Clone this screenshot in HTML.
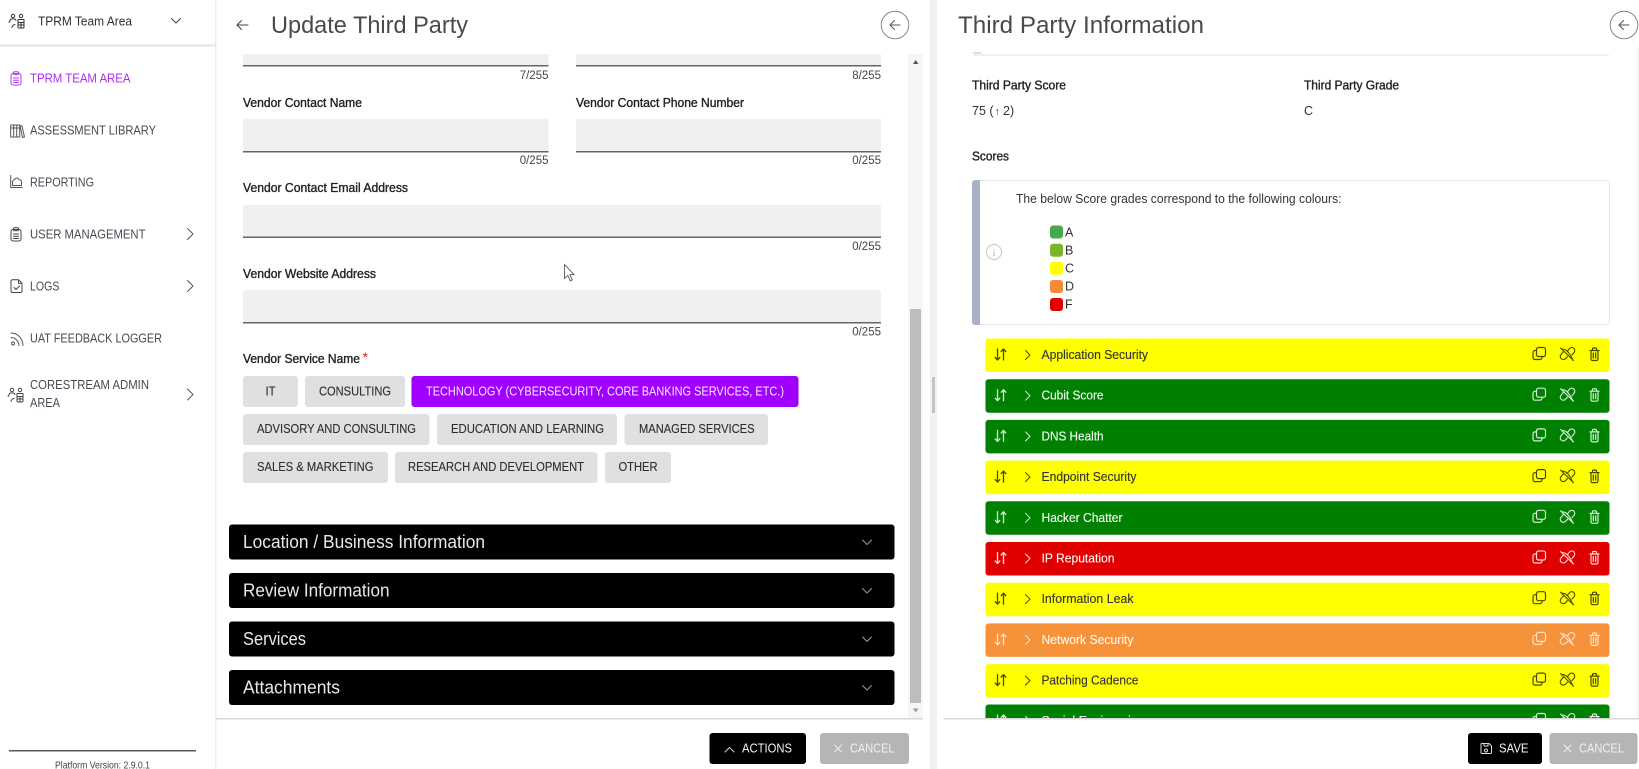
<!DOCTYPE html>
<html><head><meta charset="utf-8"><title>Update Third Party</title>
<style>
html,body{margin:0;padding:0;background:#fff;width:1639px;height:769px;overflow:hidden}
svg{display:block;font-family:"Liberation Sans",sans-serif}
text{white-space:pre}
.ic{fill:none;stroke:currentColor;stroke-width:1;stroke-linecap:round;stroke-linejoin:round}
.lb{font-size:12.5px;fill:#222;stroke:#222;stroke-width:.35}
.ct{font-size:11.5px;fill:#444;text-anchor:end}
.ch{font-size:12.5px;fill:#2e2e2e;stroke:#2e2e2e;stroke-width:.12}
.nav{font-size:12.5px;fill:#4a4a55}
.ac{font-size:18px;fill:#e8e8e8}
.ti{font-size:24px;fill:#4a4a4a}
.rw{font-size:12.5px}
.rw text{stroke:currentColor;stroke-width:.12}
</style></head><body>
<svg width="1639" height="769" viewBox="0 0 1639 769" xmlns="http://www.w3.org/2000/svg">
<defs>
<g id="ri" class="ic">
  <path d="M998 10.500v11M995.700 19 998 21.500l2.300-2.500M1004 21.500v-11M1001.700 13 1004 10.500l2.300 2.500" stroke-width="1.300"/>
  <path d="M1026 12l4.500 4.500-4.500 4.500"/>
  <rect x="1537" y="9" width="9" height="9" rx="2" stroke-width="1.200"/>
  <path d="M1537 12h-1.500a2 2 0 0 0-2 2v5a2 2 0 0 0 2 2h5a2 2 0 0 0 2-2v-1" stroke-width="1.200"/>
  <path d="M1561 9.500 1574 22M1564 13l-2.500 3a3 3 0 0 0 4.500 4l2-2M1568 12.500l2-2.500a3 3 0 0 1 4.500 4l-2 2.500M1563 10.500c3 0 5 2 7 5s3 4.500 3 6" stroke-width="1.100"/>
  <path d="M1590.500 12h9M1593 12v-1.500a1 1 0 0 1 1-1h2a1 1 0 0 1 1 1V12M1591.500 12v8.500a1.500 1.500 0 0 0 1.500 1.500h4a1.500 1.500 0 0 0 1.500-1.500V12M1593.800 14.500v5M1596.200 14.500v5" stroke-width="1.200"/>
</g>
<g id="grp" class="ic" stroke-width=".9">
  <circle cx="4" cy="3" r="1.700"/><path d="M0 9.500 2 6h4l1 1.500"/>
  <circle cx="12" cy="3" r="1.700"/><path d="M9 6.500h6v3H9z"/>
  <rect x="9" y="9.500" width="6" height="5.500" rx="1"/><path d="M3 14.500c0-2 2-3 3-3M9 12h6M12 9.500V15"/>
</g>
<g id="clip" class="ic" stroke-width="1.100">
  <rect x="1" y="2.500" width="10" height="11.500" rx="2"/><rect x="3.500" y=".7" width="5" height="3" rx="1"/>
  <path d="M3.500 7h5M3.500 9.300h5M3.500 11.500h5"/>
</g>
<g id="chr" class="ic"><path d="M0 0l5.500 5.500L0 11"/></g>
<g id="chd" class="ic"><path d="M0 0l4.500 4.500L9 0"/></g>
</defs>

<rect x="0" y="0" width="1639" height="769" fill="#fff"/>
<rect x="215" y="0" width="1.500" height="769" fill="#ececec"/>
<rect x="930" y="0" width="7" height="769" fill="#f1f1f1"/>
<rect x="932" y="377" width="3" height="36" fill="#c4c4c4"/>
<rect x="1637" y="47" width="2" height="671" fill="#f4f4f4"/>

<!-- sidebar -->
<use href="#grp" x="9" y="13" color="#333"/>
<text x="38" y="25.500" font-size="13" fill="#2f2f2f" textLength="94" lengthAdjust="spacingAndGlyphs">TPRM Team Area</text>
<use href="#chd" x="171.500" y="18.500" color="#444"/>
<rect x="0" y="44.500" width="215" height="2" fill="#e4e4e4"/>

<use href="#clip" x="10" y="71" color="#b23cf0"/>
<text class="nav" style="fill:#b02ff0" x="30" y="82.500" textLength="100.500" lengthAdjust="spacingAndGlyphs">TPRM TEAM AREA</text>
<g class="ic" color="#555" transform="translate(10,124)"><path d="M.7 1h3v12h-3zM3.700 1h3v12h-3zM6.700 1h3v12h-3zM10 1.500l2 .5 2.500 11-2 .5zM.7 4h9"/></g>
<text class="nav" x="30" y="134.500" textLength="126" lengthAdjust="spacingAndGlyphs">ASSESSMENT LIBRARY</text>
<g class="ic" color="#555" transform="translate(10,175)"><path d="M.7.500v12h11.500M2.500 10.500v-4c1.500-2 3-3.500 4.500-3.500 1.500 0 2 2 3 2s1.500.5 1.500 2v3.500z"/></g>
<text class="nav" x="30" y="186.500" textLength="64" lengthAdjust="spacingAndGlyphs">REPORTING</text>
<use href="#clip" x="10" y="227" color="#444"/>
<text class="nav" x="30" y="238.500" textLength="115.500" lengthAdjust="spacingAndGlyphs">USER MANAGEMENT</text>
<use href="#chr" x="187.500" y="228.500" color="#555"/>
<g class="ic" color="#444" stroke-width="1.100" transform="translate(11,279)"><path d="M1.500.7h6L11 4.200V12a1.500 1.500 0 0 1-1.500 1.500h-8A1.500 1.500 0 0 1 0 12V2.200A1.500 1.500 0 0 1 1.500.7zM7.500.7v3.500H11M3 8.500l2 2 3.500-3.500"/></g>
<text class="nav" x="30" y="290.500" textLength="29.500" lengthAdjust="spacingAndGlyphs">LOGS</text>
<use href="#chr" x="187.500" y="280.500" color="#555"/>
<g class="ic" color="#555" transform="translate(11,332)"><path d="M0 5.500c4 0 7.500 3 8 8M0 1c6.500 0 11.500 5 12 12.500"/><circle cx="2" cy="11.500" r="1.500"/></g>
<text class="nav" x="30" y="342.500" textLength="132" lengthAdjust="spacingAndGlyphs">UAT FEEDBACK LOGGER</text>
<use href="#grp" x="8" y="387" color="#444"/>
<text class="nav" x="30" y="389" textLength="119" lengthAdjust="spacingAndGlyphs">CORESTREAM ADMIN</text>
<text class="nav" x="30" y="407" textLength="30" lengthAdjust="spacingAndGlyphs">AREA</text>
<use href="#chr" x="187.500" y="389" color="#555"/>
<rect x="9" y="750" width="187" height="1.500" fill="#5a5a5a"/>
<text x="55" y="768.500" font-size="9.800" fill="#444" textLength="95" lengthAdjust="spacingAndGlyphs">Platform Version: 2.9.0.1</text>

<!-- left panel header -->
<g class="ic" color="#444" transform="translate(237,20)"><path d="M0 5h11M4.500.5 0 5l4.500 4.500"/></g>
<text class="ti" x="271" y="33" textLength="197" lengthAdjust="spacingAndGlyphs">Update Third Party</text>
<circle cx="895" cy="25" r="13.800" fill="#fff" stroke="#888" stroke-width="1"/>
<g class="ic" color="#555" transform="translate(890,20)"><path d="M0 5h10M4.500.5 0 5l4.500 4.500"/></g>

<!-- scroll track -->
<rect x="908" y="54" width="15" height="664" fill="#f6f6f6"/>
<rect x="910" y="309" width="11" height="394" fill="#bdbdbd"/>
<path d="M913 64l2.700-4 2.700 4z" fill="#555"/>
<path d="M913 708.500l2.700 4 2.700-4z" fill="#999"/>

<!-- fields -->
<rect x="243" y="54" width="305.500" height="12" fill="#f0f0f0"/><rect x="243" y="65" width="305.500" height="1.500" fill="#666"/>
<rect x="576" y="54" width="305" height="12" fill="#f0f0f0"/><rect x="576" y="65" width="305" height="1.500" fill="#666"/>
<text class="ct" x="548.500" y="79">7/255</text>
<text class="ct" x="881" y="79">8/255</text>
<text class="lb" x="243" y="107" textLength="119" lengthAdjust="spacingAndGlyphs">Vendor Contact Name</text>
<text class="lb" x="576" y="107" textLength="168" lengthAdjust="spacingAndGlyphs">Vendor Contact Phone Number</text>
<rect x="243" y="119" width="305.500" height="33" rx="2" fill="#f0f0f0"/><rect x="243" y="151" width="305.500" height="1.500" fill="#666"/>
<rect x="576" y="119" width="305" height="33" rx="2" fill="#f0f0f0"/><rect x="576" y="151" width="305" height="1.500" fill="#666"/>
<text class="ct" x="548.500" y="164">0/255</text>
<text class="ct" x="881" y="164">0/255</text>
<text class="lb" x="243" y="192" textLength="165" lengthAdjust="spacingAndGlyphs">Vendor Contact Email Address</text>
<rect x="243" y="205" width="638" height="33" rx="2" fill="#f0f0f0"/><rect x="243" y="236.500" width="638" height="1.500" fill="#666"/>
<text class="ct" x="881" y="250">0/255</text>
<text class="lb" x="243" y="278" textLength="133" lengthAdjust="spacingAndGlyphs">Vendor Website Address</text>
<rect x="243" y="290" width="638" height="33" rx="2" fill="#f0f0f0"/><rect x="243" y="322" width="638" height="1.500" fill="#666"/>
<text class="ct" x="881" y="335.500">0/255</text>
<text class="lb" x="243" y="363" textLength="117" lengthAdjust="spacingAndGlyphs">Vendor Service Name</text>
<text x="362.500" y="362" font-size="14" fill="#e02020">*</text>

<!-- cursor -->
<path d="M564.500 264.500v14l3.300-3 2.500 5.300 2-1-2.500-5.200h4.200z" fill="#fff" stroke="#444" stroke-width=".8"/>

<!-- chips -->
<g fill="#e0e0e0">
<rect x="243" y="376" width="55" height="31" rx="3"/>
<rect x="305" y="376" width="100" height="31" rx="3"/>
<rect x="243" y="414" width="186.500" height="31" rx="3"/>
<rect x="437" y="414" width="180" height="31" rx="3"/>
<rect x="624.500" y="414" width="143.500" height="31" rx="3"/>
<rect x="243" y="452" width="145" height="31" rx="3"/>
<rect x="395" y="452" width="202.500" height="31" rx="3"/>
<rect x="605" y="452" width="66" height="31" rx="3"/>
</g>
<rect x="411.500" y="376" width="387" height="31" rx="3" fill="#a100ff"/>
<text class="ch" x="265.500" y="395.500" textLength="10" lengthAdjust="spacingAndGlyphs">IT</text>
<text class="ch" x="319" y="395.500" textLength="72" lengthAdjust="spacingAndGlyphs">CONSULTING</text>
<text x="426" y="395.500" font-size="12.5" fill="#f6eaff" textLength="358" lengthAdjust="spacingAndGlyphs">TECHNOLOGY (CYBERSECURITY, CORE BANKING SERVICES, ETC.)</text>
<text class="ch" x="257" y="433" textLength="159" lengthAdjust="spacingAndGlyphs">ADVISORY AND CONSULTING</text>
<text class="ch" x="451" y="433" textLength="153" lengthAdjust="spacingAndGlyphs">EDUCATION AND LEARNING</text>
<text class="ch" x="639" y="433" textLength="115.500" lengthAdjust="spacingAndGlyphs">MANAGED SERVICES</text>
<text class="ch" x="257" y="471" textLength="116.500" lengthAdjust="spacingAndGlyphs">SALES &amp; MARKETING</text>
<text class="ch" x="408" y="471" textLength="176" lengthAdjust="spacingAndGlyphs">RESEARCH AND DEVELOPMENT</text>
<text class="ch" x="618.500" y="471" textLength="39" lengthAdjust="spacingAndGlyphs">OTHER</text>

<!-- accordions -->
<g fill="#000">
<rect x="229" y="524.500" width="665.500" height="35" rx="3"/>
<rect x="229" y="573" width="665.500" height="35" rx="3"/>
<rect x="229" y="621.500" width="665.500" height="35" rx="3"/>
<rect x="229" y="670" width="665.500" height="35" rx="3"/>
</g>
<text class="ac" x="243" y="548" textLength="242" lengthAdjust="spacingAndGlyphs">Location / Business Information</text>
<text class="ac" x="243" y="596.500" textLength="146.500" lengthAdjust="spacingAndGlyphs">Review Information</text>
<text class="ac" x="243" y="645" textLength="63" lengthAdjust="spacingAndGlyphs">Services</text>
<text class="ac" x="243" y="693.500" textLength="97" lengthAdjust="spacingAndGlyphs">Attachments</text>
<use href="#chd" x="862.500" y="540" color="#999"/>
<use href="#chd" x="862.500" y="588.500" color="#999"/>
<use href="#chd" x="862.500" y="637" color="#999"/>
<use href="#chd" x="862.500" y="685.500" color="#999"/>

<!-- left footer -->
<rect x="216" y="718" width="707" height="1.500" fill="#d8d8d8"/>
<rect x="709.500" y="733" width="96.500" height="31" rx="3" fill="#000"/>
<g class="ic" color="#ccc"><path d="M725 752l4.500-4.500 4.500 4.500"/></g>
<text x="742" y="752.500" font-size="12.500" fill="#f4f4f4" textLength="50" lengthAdjust="spacingAndGlyphs">ACTIONS</text>
<rect x="820" y="733" width="89" height="31" rx="3" fill="#b5b5b5"/>
<g class="ic" color="#f0f0f0"><path d="M834.500 745l7 7M841.500 745l-7 7"/></g>
<text x="850" y="752.500" font-size="12.500" fill="#f0f0f0" textLength="44.500" lengthAdjust="spacingAndGlyphs">CANCEL</text>

<!-- right panel -->
<text class="ti" x="958" y="33" textLength="246" lengthAdjust="spacingAndGlyphs">Third Party Information</text>
<circle cx="1624" cy="25" r="13.800" fill="#fff" stroke="#888" stroke-width="1"/>
<g class="ic" color="#555" transform="translate(1619,20)"><path d="M0 5h10M4.500.5 0 5l4.500 4.500"/></g>
<rect x="973" y="54.500" width="636" height="1" fill="#e2e2e2"/>
<rect x="973" y="52" width="8" height="2" fill="#e0e0e0"/>
<text class="lb" x="972" y="89.500" textLength="94" lengthAdjust="spacingAndGlyphs">Third Party Score</text>
<text class="lb" x="1304" y="89.500" textLength="95" lengthAdjust="spacingAndGlyphs">Third Party Grade</text>
<text x="972" y="115" font-size="12.500" fill="#333">75 (</text>
<text x="994.500" y="115" font-size="10.500" font-weight="700" fill="#333">↑</text>
<text x="1003" y="115" font-size="12.500" fill="#333">2)</text>
<text x="1304" y="115" font-size="12.500" fill="#333">C</text>
<text class="lb" x="972" y="160.500" textLength="37" lengthAdjust="spacingAndGlyphs">Scores</text>

<rect x="972.500" y="180.500" width="637" height="144" rx="3" fill="#fff" stroke="#e6e6e6"/>
<path d="M975 180h5v145h-5a3 3 0 0 1-3-3V183a3 3 0 0 1 3-3z" fill="#a9b1c6"/>
<circle cx="994" cy="252" r="7.500" fill="none" stroke="#c4c4c4" stroke-width="1"/>
<text x="994" y="256" font-size="10" font-family="Liberation Serif" fill="#aaa" text-anchor="middle">i</text>
<text x="1016" y="203" font-size="12.500" fill="#333" textLength="325.500" lengthAdjust="spacingAndGlyphs">The below Score grades correspond to the following colours:</text>
<rect x="1050" y="225.500" width="13" height="13" rx="3" fill="#47a84e"/>
<rect x="1050" y="243.700" width="13" height="13" rx="3" fill="#7db52a"/>
<rect x="1050" y="261.800" width="13" height="13" rx="3" fill="#ffff00"/>
<rect x="1050" y="280" width="13" height="13" rx="3" fill="#f58c35"/>
<rect x="1050" y="298" width="13" height="13" rx="3" fill="#e00000"/>
<g font-size="12.500" fill="#333">
<text x="1065" y="236.500">A</text><text x="1065" y="254.500">B</text><text x="1065" y="272.500">C</text><text x="1065" y="290.500">D</text><text x="1065" y="308.500">F</text>
</g>

<!-- score rows -->
<g class="rw">
<rect x="985.500" y="338.500" width="624" height="33.500" rx="3" fill="#ffff00"/>
<use href="#ri" y="338.500" x="-.5" color="#4a4a00"/>
<text x="1041.500" y="359" fill="#333" color="#333" textLength="106.500" lengthAdjust="spacingAndGlyphs">Application Security</text>

<rect x="985.500" y="379.200" width="624" height="33.500" rx="3" fill="#008000"/>
<use href="#ri" y="379.200" x="-.5" color="#d8eed8"/>
<text x="1041.500" y="399.700" fill="#f4fbf4" color="#f4fbf4" textLength="62" lengthAdjust="spacingAndGlyphs">Cubit Score</text>

<rect x="985.500" y="419.900" width="624" height="33.500" rx="3" fill="#008000"/>
<use href="#ri" y="419.900" x="-.5" color="#d8eed8"/>
<text x="1041.500" y="440.400" fill="#f4fbf4" color="#f4fbf4" textLength="62" lengthAdjust="spacingAndGlyphs">DNS Health</text>

<rect x="985.500" y="460.600" width="624" height="33.500" rx="3" fill="#ffff00"/>
<use href="#ri" y="460.600" x="-.5" color="#4a4a00"/>
<text x="1041.500" y="481.100" fill="#333" color="#333" textLength="95" lengthAdjust="spacingAndGlyphs">Endpoint Security</text>

<rect x="985.500" y="501.300" width="624" height="33.500" rx="3" fill="#008000"/>
<use href="#ri" y="501.300" x="-.5" color="#d8eed8"/>
<text x="1041.500" y="521.800" fill="#f4fbf4" color="#f4fbf4" textLength="81" lengthAdjust="spacingAndGlyphs">Hacker Chatter</text>

<rect x="985.500" y="542" width="624" height="33.500" rx="3" fill="#e00000"/>
<use href="#ri" y="542" x="-.5" color="#ffd8d8"/>
<text x="1041.500" y="562.500" fill="#fff4f4" color="#fff4f4" textLength="73" lengthAdjust="spacingAndGlyphs">IP Reputation</text>

<rect x="985.500" y="582.700" width="624" height="33.500" rx="3" fill="#ffff00"/>
<use href="#ri" y="582.700" x="-.5" color="#4a4a00"/>
<text x="1041.500" y="603.200" fill="#333" color="#333" textLength="92" lengthAdjust="spacingAndGlyphs">Information Leak</text>

<rect x="985.500" y="623.400" width="624" height="33.500" rx="3" fill="#f5923a"/>
<use href="#ri" y="623.400" x="-.5" color="#fde2c8"/>
<text x="1041.500" y="643.900" fill="#fff6ee" color="#fff6ee" textLength="92" lengthAdjust="spacingAndGlyphs">Network Security</text>

<rect x="985.500" y="664.100" width="624" height="33.500" rx="3" fill="#ffff00"/>
<use href="#ri" y="664.100" x="-.5" color="#4a4a00"/>
<text x="1041.500" y="684.600" fill="#333" color="#333" textLength="97" lengthAdjust="spacingAndGlyphs">Patching Cadence</text>

<rect x="985.500" y="704.500" width="624" height="33.500" rx="3" fill="#008000"/>
<use href="#ri" y="704.500" x="-.5" color="#d8eed8"/>
<text x="1041.500" y="725" fill="#f4fbf4" color="#f4fbf4" textLength="103" lengthAdjust="spacingAndGlyphs">Social Engineering</text>
</g>

<!-- right footer -->
<rect x="943.500" y="718" width="695.500" height="51" fill="#fff"/>
<rect x="943.500" y="718" width="695.500" height="1.500" fill="#d8d8d8"/>
<rect x="1468" y="733" width="74" height="31" rx="3" fill="#000"/>
<g class="ic" color="#ddd"><path d="M1482 743.500h7l2.500 2.500v6.500a1 1 0 0 1-1 1h-8.500a1 1 0 0 1-1-1v-8a1 1 0 0 1 1-1zM1484 743.500v2.500h4v-2.500"/><circle cx="1486" cy="750.500" r="1.500"/></g>
<text x="1499" y="752.500" font-size="12.500" fill="#f4f4f4" textLength="29.500" lengthAdjust="spacingAndGlyphs">SAVE</text>
<rect x="1549.500" y="733" width="88" height="31" rx="3" fill="#b5b5b5"/>
<g class="ic" color="#f0f0f0"><path d="M1564 745l7 7M1571 745l-7 7"/></g>
<text x="1579" y="752.500" font-size="12.500" fill="#f0f0f0" textLength="45" lengthAdjust="spacingAndGlyphs">CANCEL</text>
</svg>
</body></html>
